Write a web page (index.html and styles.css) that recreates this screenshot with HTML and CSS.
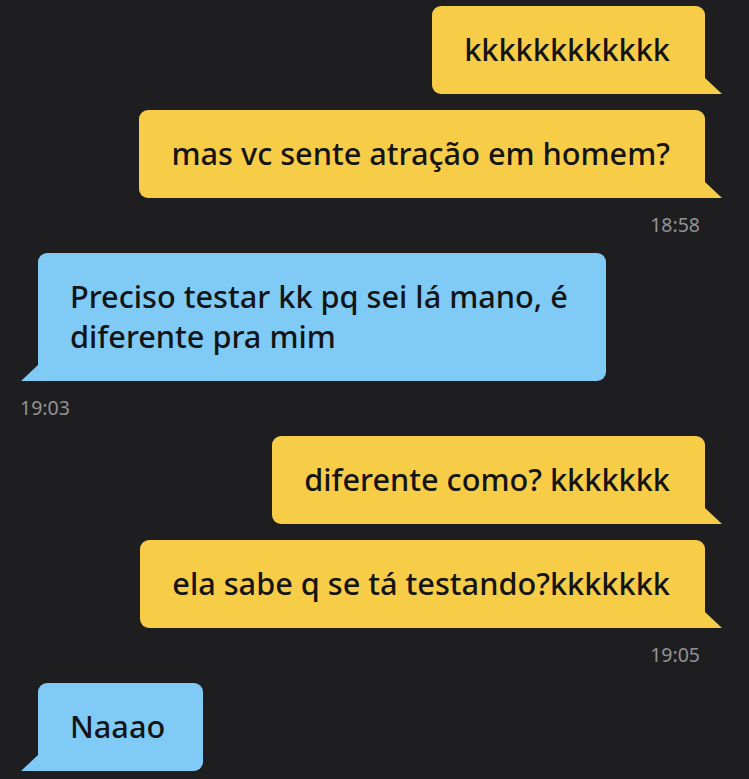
FILE: index.html
```html
<!DOCTYPE html>
<html lang="pt">
<head>
    <meta charset="UTF-8">
    <meta name="viewport" content="width=device-width, initial-scale=1.0">
    <title>Chat</title>
    <link rel="stylesheet" href="styles.css">
</head>
<body>
    <div class="chat">
        <div class="msg out">kkkkkkkkkkkk</div>
        <div class="msg out">mas vc sente atração em homem?</div>
        <div class="time out-time">18:58</div>

        <div class="msg in">Preciso testar kk pq sei lá mano, é<br>diferente pra mim</div>
        <div class="time in-time">19:03</div>

        <div class="msg out">diferente como? kkkkkkk</div>
        <div class="msg out">ela sabe q se tá testando?kkkkkkk</div>
        <div class="time out-time">19:05</div>

        <div class="msg in">Naaao</div>
    </div>
</body>
</html>
```

FILE: styles.css
```css
body {
    margin: 0;
    background-color: #1e1e20;
    font-family: "Noto Sans", "Open Sans", sans-serif;
    height: 779px;
    overflow: hidden;
}

.chat {
    display: flex;
    flex-direction: column;
    padding-top: 6px;
}

.msg {
    position: relative;
    font-size: 30.7px;
    font-weight: 500;
    line-height: 40px;
    color: #141414;
    padding: 23px 35px 25px 32px;
    border-radius: 9px;
    margin-bottom: 16px;
}

.msg.out {
    align-self: flex-end;
    margin-right: 44px;
    background-color: #f7cd48;
    border-bottom-right-radius: 0;
}

.msg.out::after {
    content: "";
    position: absolute;
    right: -17px;
    bottom: 0;
    width: 17px;
    height: 16px;
    background-color: #f7cd48;
    clip-path: polygon(0 0, 100% 100%, 0 100%);
}

.msg.in {
    align-self: flex-start;
    margin-left: 38px;
    padding-right: 38px;
    background-color: #80cbf6;
    border-bottom-left-radius: 0;
}

.msg.in::after {
    content: "";
    position: absolute;
    left: -17px;
    bottom: 0;
    width: 17px;
    height: 16px;
    background-color: #80cbf6;
    clip-path: polygon(100% 0, 100% 100%, 0 100%);
}

.msg + .time {
    margin-top: -1px;
}

.time {
    font-size: 19.5px;
    line-height: 24px;
    color: #929296;
    margin-bottom: 16px;
}

.out-time {
    align-self: flex-end;
    margin-right: 49px;
}

.in-time {
    align-self: flex-start;
    margin-left: 20px;
}
```
